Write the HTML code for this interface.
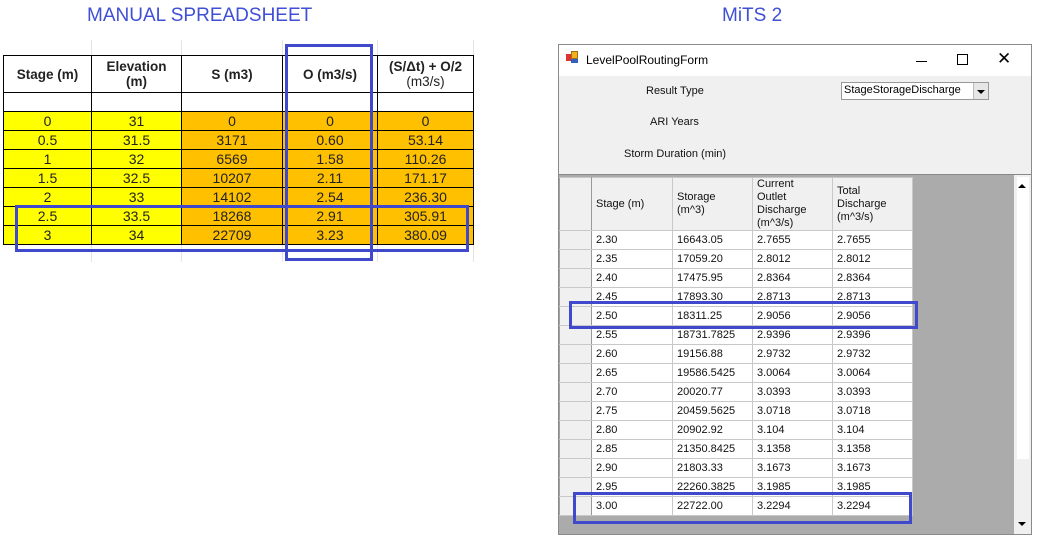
<!DOCTYPE html>
<html><head><meta charset="utf-8"><style>
*{margin:0;padding:0;box-sizing:border-box}
body{width:1040px;height:542px;background:#fff;position:relative;overflow:hidden;font-family:"Liberation Sans",sans-serif}
.a{position:absolute}
.t{color:#3f4fd6;font-size:19px;top:5px;white-space:nowrap}
.gl{background:#e3e3e3}
table{border-collapse:collapse}
#ss{position:absolute;left:3px;top:55px}
#ss td{border:1px solid #000;text-align:center;font-size:14px;height:19px;padding:0;color:#222}
#ss tr.h td{height:37px;font-weight:bold;font-size:13.5px;line-height:15px;background:#fff}
.y{background:#ffff00}.o{background:#ffc000}
.box{position:absolute;border:3px solid #4048cc}
#win{left:558px;top:44px;width:474px;height:491px;border:1px solid #8a8a8a;background:#f0f0f0}
#grid{position:absolute;left:0;top:129px;width:472px;height:360px;background:#ababab;border-top:1px solid #888}
#g{position:absolute;left:0;top:2px}
#g td{border:1px solid #c8c8c8;border-left:1px solid #a0a0a0;font-size:11px;height:19px;padding:0 0 0 4px;background:#fff;color:#111;vertical-align:middle}
#g td.r{background:#f0f0f0;width:32px;border-right:1px solid #999}
#g tr.h td{height:53px;background:#f0f0f0;line-height:13px}
.lb{font-size:11px;color:#111}
</style></head><body>
<div class="a t" style="left:87px">MANUAL SPREADSHEET</div>
<div class="a t" style="left:722px">MiTS 2</div>
<!-- faint gridlines -->
<div class="a gl" style="left:91px;top:40px;width:1px;height:222px"></div>
<div class="a gl" style="left:181px;top:40px;width:1px;height:222px"></div>
<div class="a gl" style="left:282px;top:40px;width:1px;height:222px"></div>
<div class="a gl" style="left:377px;top:40px;width:1px;height:222px"></div>
<div class="a gl" style="left:473px;top:40px;width:1px;height:222px"></div>
<table id="ss">
<tr class="h"><td style="width:88px">Stage (m)</td><td style="width:90px">Elevation<br>(m)</td><td style="width:101px">S (m3)</td><td style="width:95px">O (m3/s)</td><td style="width:96px">(S/Δt) + O/2<br><span style="font-weight:normal">(m3/s)</span></td></tr>
<tr><td style="height:19px"></td><td></td><td></td><td></td><td></td></tr>
<tr><td class="y">0</td><td class="y">31</td><td class="o">0</td><td class="o">0</td><td class="o">0</td></tr>
<tr><td class="y">0.5</td><td class="y">31.5</td><td class="o">3171</td><td class="o">0.60</td><td class="o">53.14</td></tr>
<tr><td class="y">1</td><td class="y">32</td><td class="o">6569</td><td class="o">1.58</td><td class="o">110.26</td></tr>
<tr><td class="y">1.5</td><td class="y">32.5</td><td class="o">10207</td><td class="o">2.11</td><td class="o">171.17</td></tr>
<tr><td class="y">2</td><td class="y">33</td><td class="o">14102</td><td class="o">2.54</td><td class="o">236.30</td></tr>
<tr><td class="y">2.5</td><td class="y">33.5</td><td class="o">18268</td><td class="o">2.91</td><td class="o">305.91</td></tr>
<tr><td class="y">3</td><td class="y">34</td><td class="o">22709</td><td class="o">3.23</td><td class="o">380.09</td></tr>
</table>
<div class="box" style="left:285px;top:44px;width:88px;height:217px"></div>
<div class="box" style="left:15px;top:205px;width:454px;height:47px"></div>

<div class="a" id="win">
 <div class="a" style="left:0;top:0;width:472px;height:31px;background:#fff"></div>
 <div class="a" style="left:7px;top:9px;width:6px;height:7px;background:#d33"></div>
 <div class="a" style="left:12px;top:6px;width:7px;height:8px;background:#f0b020;border:1px solid #a07010"></div>
 <div class="a" style="left:12px;top:14px;width:7px;height:4px;background:#3060c0"></div>
 <div class="a" style="left:27px;top:8px;font-size:12px;color:#000">LevelPoolRoutingForm</div>
 <div class="a" style="left:357px;top:16px;width:11px;height:1px;background:#000"></div>
 <div class="a" style="left:398px;top:9px;width:11px;height:11px;border:1px solid #000"></div>
 <div class="a" style="left:438px;top:4px;font-size:17px;color:#000">✕</div>
 <div class="a lb" style="left:87px;top:40px">Result Type</div>
 <div class="a lb" style="left:91px;top:71px">ARI Years</div>
 <div class="a lb" style="left:65px;top:103px">Storm Duration (min)</div>
 <div class="a" style="left:282px;top:37px;width:148px;height:18px;background:#fff;border:1px solid #999"></div>
 <div class="a" style="left:285px;top:39px;font-size:11px">StageStorageDischarge</div>
 <div class="a" style="left:414px;top:38px;width:15px;height:16px;background:#e6e6e6;border-left:1px solid #bbb"></div>
 <div class="a" style="left:418px;top:45px;border:4px solid transparent;border-top:4px solid #000;width:0;height:0"></div>
 <div id="grid">
  <table id="g">
  <tr class="h"><td class="r"></td><td style="width:81px">Stage (m)</td><td style="width:80px">Storage<br>(m^3)</td><td style="width:80px">Current<br>Outlet<br>Discharge<br>(m^3/s)</td><td style="width:80px">Total<br>Discharge<br>(m^3/s)</td></tr>
  <tr><td class="r"></td><td>2.30</td><td>16643.05</td><td>2.7655</td><td>2.7655</td></tr>
  <tr><td class="r"></td><td>2.35</td><td>17059.20</td><td>2.8012</td><td>2.8012</td></tr>
  <tr><td class="r"></td><td>2.40</td><td>17475.95</td><td>2.8364</td><td>2.8364</td></tr>
  <tr><td class="r"></td><td>2.45</td><td>17893.30</td><td>2.8713</td><td>2.8713</td></tr>
  <tr><td class="r"></td><td>2.50</td><td>18311.25</td><td>2.9056</td><td>2.9056</td></tr>
  <tr><td class="r"></td><td>2.55</td><td>18731.7825</td><td>2.9396</td><td>2.9396</td></tr>
  <tr><td class="r"></td><td>2.60</td><td>19156.88</td><td>2.9732</td><td>2.9732</td></tr>
  <tr><td class="r"></td><td>2.65</td><td>19586.5425</td><td>3.0064</td><td>3.0064</td></tr>
  <tr><td class="r"></td><td>2.70</td><td>20020.77</td><td>3.0393</td><td>3.0393</td></tr>
  <tr><td class="r"></td><td>2.75</td><td>20459.5625</td><td>3.0718</td><td>3.0718</td></tr>
  <tr><td class="r"></td><td>2.80</td><td>20902.92</td><td>3.104</td><td>3.104</td></tr>
  <tr><td class="r"></td><td>2.85</td><td>21350.8425</td><td>3.1358</td><td>3.1358</td></tr>
  <tr><td class="r"></td><td>2.90</td><td>21803.33</td><td>3.1673</td><td>3.1673</td></tr>
  <tr><td class="r"></td><td>2.95</td><td>22260.3825</td><td>3.1985</td><td>3.1985</td></tr>
  <tr><td class="r"></td><td>3.00</td><td>22722.00</td><td>3.2294</td><td>3.2294</td></tr>
  </table>
  <div class="a" style="left:455px;top:0;width:17px;height:359px;background:#f0f0f0"></div>
  <div class="a" style="left:458px;top:2px;width:12px;height:282px;background:#fff"></div>
  <div class="a" style="left:459px;top:5px;border:4px solid transparent;border-bottom:4px solid #000;width:0;height:0"></div>
  <div class="a" style="left:459px;top:347px;border:4px solid transparent;border-top:4px solid #000;width:0;height:0"></div>
 </div>
</div>
<div class="box" style="left:569px;top:301px;width:349px;height:28px"></div>
<div class="box" style="left:573px;top:492px;width:339px;height:32px"></div>
</body></html>
